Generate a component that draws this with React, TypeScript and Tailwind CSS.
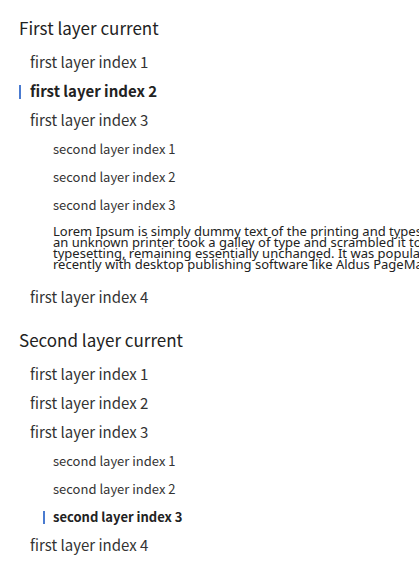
import type { ReactNode } from "react";

const lorem = [
  "Lorem Ipsum is simply dummy text of the printing and typesetting industry. Lorem Ipsum has been the industry's standard dummy text ever since the 1500s, when",
  "an unknown printer took a galley of type and scrambled it to make a type specimen book. It has survived not only five centuries, but also the leap into electronic",
  "typesetting, remaining essentially unchanged. It was popularised in the 1960s with the release of Letraset sheets containing Lorem Ipsum passages, and more",
  "recently with desktop publishing software like Aldus PageMaker including versions of Lorem Ipsum.",
];

function FirstItem({ current, children }: { current?: boolean; children: ReactNode }) {
  return (
    <li className="flex h-[29px] items-center">
      {current ? (
        <>
          <span className="ml-[19px] h-[14px] w-[2px] bg-[#4a7bd0]" />
          <span className="ml-[9px] text-[15px] font-bold text-[#222]">{children}</span>
        </>
      ) : (
        <span className="pl-[30px] text-[15px] text-[#333]">{children}</span>
      )}
    </li>
  );
}

function SecondItem({ current, children }: { current?: boolean; children: ReactNode }) {
  return (
    <li className="flex h-[28px] items-center">
      {current ? (
        <>
          <span className="ml-[43px] h-[13px] w-[2px] bg-[#4a7bd0]" />
          <span className="ml-[8px] text-[13px] font-bold text-[#222]">{children}</span>
        </>
      ) : (
        <span className="pl-[53px] text-[13px] text-[#333]">{children}</span>
      )}
    </li>
  );
}

function Heading({ children }: { children: ReactNode }) {
  return <h2 className="mb-[8px] pl-[19px] text-[17px] leading-[24px] text-[#222]">{children}</h2>;
}

export default function App() {
  return (
    <div className="h-[586px] w-[419px] overflow-hidden bg-white font-['Noto_Sans_CJK_JP',sans-serif]">
      <section className="pt-[16px]">
        <Heading>First layer current</Heading>
        <ul>
          <FirstItem>first layer index 1</FirstItem>
          <FirstItem current>first layer index 2</FirstItem>
          <FirstItem>first layer index 3</FirstItem>
          <SecondItem>second layer index 1</SecondItem>
          <SecondItem>second layer index 2</SecondItem>
          <SecondItem>second layer index 3</SecondItem>
          <li className="overflow-hidden py-[7px] pl-[53px] font-['Noto_Sans',sans-serif] text-[13px] leading-[11px] text-[#222]">
            {lorem.map((line) => (
              <div key={line} className="whitespace-nowrap">
                {line}
              </div>
            ))}
          </li>
          <div className="mt-[6px]">
            <FirstItem>first layer index 4</FirstItem>
          </div>
        </ul>
      </section>
      <section className="pt-[16px]">
        <Heading>Second layer current</Heading>
        <ul>
          <FirstItem>first layer index 1</FirstItem>
          <FirstItem>first layer index 2</FirstItem>
          <FirstItem>first layer index 3</FirstItem>
          <SecondItem>second layer index 1</SecondItem>
          <SecondItem>second layer index 2</SecondItem>
          <SecondItem current>second layer index 3</SecondItem>
          <FirstItem>first layer index 4</FirstItem>
        </ul>
      </section>
    </div>
  );
}
